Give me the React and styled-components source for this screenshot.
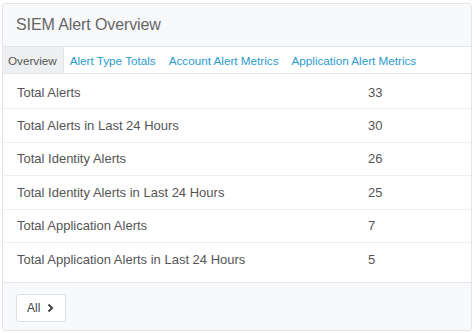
import React, { useState } from 'react'
import styled, { createGlobalStyle } from 'styled-components'

const GlobalStyle = createGlobalStyle`
  body {
    margin: 0;
    background: #fff;
    font-family: "Liberation Sans", Arial, sans-serif;
  }
`

const tabs = ['Overview', 'Alert Type Totals', 'Account Alert Metrics', 'Application Alert Metrics']

const rows = [
  ['Total Alerts', 33],
  ['Total Alerts in Last 24 Hours', 30],
  ['Total Identity Alerts', 26],
  ['Total Identity Alerts in Last 24 Hours', 25],
  ['Total Application Alerts', 7],
  ['Total Application Alerts in Last 24 Hours', 5],
]

const App = () => {
  const [active, setActive] = useState(0)
  return (
    <>
      <GlobalStyle />
      <Page>
        <Card>
          <Header>SIEM Alert Overview</Header>
          <TabBar>
            {tabs.map((t, i) => (
              <Tab key={t} $active={active === i} onClick={() => setActive(i)}>{t}</Tab>
            ))}
          </TabBar>
          <Body>
            {rows.map(([label, value]) => (
              <Row key={label}>
                <Label>{label}</Label>
                <Value>{value}</Value>
              </Row>
            ))}
          </Body>
          <Footer>
            <AllButton>
              All
              <svg width="9" height="10" viewBox="0 0 9 10">
                <path d="M2.5 1.5 L6 5 L2.5 8.5" fill="none" stroke="#444" strokeWidth="2" />
              </svg>
            </AllButton>
          </Footer>
        </Card>
      </Page>
    </>
  )
}

export default App

const Page = styled.div`
  padding: 3px 2px 2px 2px;
`
const Card = styled.div`
  border: 1px solid #e3e5e8;
  border-radius: 3px;
  background: #fff;
  overflow: hidden;
`
const Header = styled.div`
  height: 42px;
  display: flex;
  align-items: center;
  padding-left: 13px;
  background: #f8f9fb;
  border-bottom: 1px solid #e3e5e8;
  font-size: 16px;
  color: #666;
  letter-spacing: -0.1px;
`
const TabBar = styled.div`
  display: flex;
  height: 26px;
  border-bottom: 1px solid #e3e5e8;
`
const Tab = styled.div`
  display: flex;
  align-items: center;
  padding: 0 6px 0 5px;
  margin-right: 1px;
  font-size: 11.7px;
  cursor: pointer;
  color: ${p => (p.$active ? '#555' : '#2a9bd0')};
  background: ${p => (p.$active ? '#eeeff1' : 'transparent')};
  border-right: ${p => (p.$active ? '1px solid #e3e5e8' : '1px solid transparent')};
`
const Body = styled.div`
  padding-top: 2px;
  padding-bottom: 6px;
`
const Row = styled.div`
  box-sizing: border-box;
  display: flex;
  align-items: center;
  height: 33.4px;
  padding-left: 14px;
  border-bottom: 1px solid #eef0f2;
  font-size: 13px;
  color: #555;
  &:last-child {
    border-bottom: none;
  }
`
const Label = styled.div`
  width: 351px;
`
const Value = styled.div``
const Footer = styled.div`
  background: #f8f9fb;
  border-top: 1px solid #e3e5e8;
  padding: 11px 13px 8px;
`
const AllButton = styled.div`
  display: inline-flex;
  align-items: center;
  gap: 6px;
  height: 26px;
  padding: 0 10px;
  background: #fff;
  border: 1px solid #dcdfe3;
  border-radius: 3px;
  font-size: 12px;
  color: #444;
`
